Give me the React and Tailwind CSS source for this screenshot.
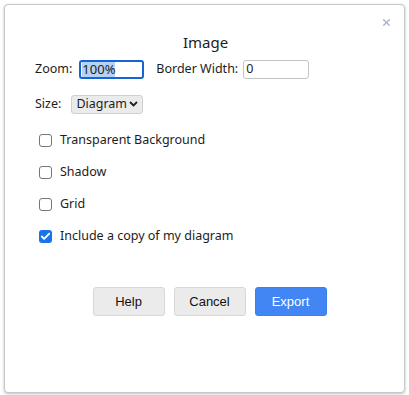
import { Check, X } from 'lucide-react';

const Checkbox = ({ checked, label }) => (
  <label className="flex items-center h-[20px]">
    {checked ? (
      <span className="w-[13px] h-[13px] rounded-[3px] bg-[#1a73e8] flex items-center justify-center">
        <Check className="w-[11px] h-[11px] text-white" strokeWidth={4} />
      </span>
    ) : (
      <span className="w-[13px] h-[13px] rounded-[3px] border border-[#767676] bg-white" />
    )}
    <span className="ml-[8px]">{label}</span>
  </label>
);

export default function App() {
  return (
    <div className="w-[409px] h-[395px] bg-white p-[4px] font-['Noto_Sans',sans-serif] text-[12.5px] text-[#1d1d1d]">
      <div className="relative h-[389px] w-[401px] rounded-[4px] border border-[#c7c7c7] bg-white shadow-[0_1px_3px_rgba(0,0,0,0.25)] pl-[30px] pr-[20px] pt-[27px]">
        <X className="absolute right-[12px] top-[12px] w-[11px] h-[11px] text-[#a9b5c4]" strokeWidth={3} />
        <div className="text-center text-[15px] leading-[20px] pr-[8px]">Image</div>
        <div className="flex items-center mt-[7px] h-[20px]">
          <span>Zoom:</span>
          <div className="ml-[7px] w-[65px] h-[19px] rounded-[3px] border-2 border-[#1565d8] flex items-center px-[1px]">
            <span className="bg-[#b4d3f7] leading-[15px] text-[13px]">100%</span>
          </div>
          <span className="ml-[12px]">Border Width:</span>
          <div className="ml-[5px] w-[66px] h-[19px] rounded-[3px] border border-[#c4c4c4] flex items-center px-[2px]">0</div>
        </div>
        <div className="flex items-center mt-[15px] h-[20px]">
          <span>Size:</span>
          <div className="ml-[10px] h-[19px] px-[4px] rounded-[3px] border border-[#d0d0d0] bg-[#ebebeb] flex items-center gap-[2px]">
            <span>Diagram</span>
            <svg width="9" height="6" viewBox="0 0 9 6"><path d="M1 1l3.5 3.5L8 1" stroke="#222" strokeWidth="1.8" fill="none" /></svg>
          </div>
        </div>
        <div className="flex flex-col gap-[12px] mt-[16px] pl-[4px]">
          <Checkbox label="Transparent Background" />
          <Checkbox label="Shadow" />
          <Checkbox label="Grid" />
          <Checkbox checked label="Include a copy of my diagram" />
        </div>
        <div className="flex justify-center gap-[9px] mt-[41px] font-['Liberation_Sans',sans-serif] text-[13px]">
          <button className="w-[72px] h-[29px] rounded-[3px] border border-[#d7d7d7] bg-[#ebebeb] text-[#111]">Help</button>
          <button className="w-[72px] h-[29px] rounded-[3px] border border-[#d7d7d7] bg-[#ebebeb] text-[#111]">Cancel</button>
          <button className="w-[72px] h-[29px] rounded-[3px] border border-[#3c7fe6] bg-[#4285f4] text-white">Export</button>
        </div>
      </div>
    </div>
  );
}
